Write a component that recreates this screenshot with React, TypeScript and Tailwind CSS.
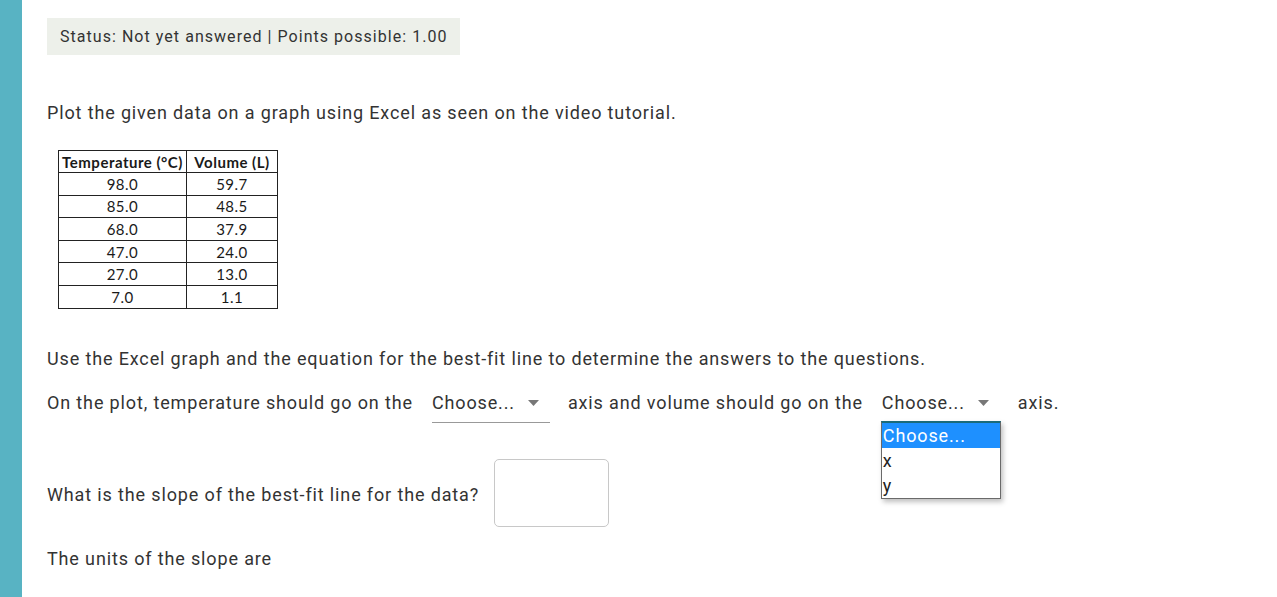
import React from "react";

const rows = [
  ["98.0", "59.7"],
  ["85.0", "48.5"],
  ["68.0", "37.9"],
  ["47.0", "24.0"],
  ["27.0", "13.0"],
  ["7.0", "1.1"],
];

function Caret() {
  return (
    <svg width="11" height="6" viewBox="0 0 11 6" className="ml-[13px] mt-[2px]">
      <polygon points="0,0 11,0 5.5,6" fill="#777" />
    </svg>
  );
}

function Select({ open }: { open?: boolean }) {
  return (
    <div className="relative">
      <div className="flex h-[34px] w-[118px] items-start border-b border-[#999]">
        <span className="leading-[27px]">Choose...</span>
        <div className="flex h-[27px] items-center">
          <Caret />
        </div>
      </div>
      {open && (
        <div className="absolute left-[-1px] top-[32px] z-10 w-[120px] border border-t-2 border-[#6a6a6a] border-t-[#1b6b7b] bg-white shadow-[2px_3px_5px_rgba(0,0,0,0.25)]">
          <div className="h-[25px] bg-[#1e90ff] pl-[1px] leading-[25px] text-white">Choose...</div>
          <div className="h-[25px] pl-[1px] leading-[25px] text-[#222]">x</div>
          <div className="h-[25px] pl-[1px] leading-[25px] text-[#222]">y</div>
        </div>
      )}
    </div>
  );
}

export default function App() {
  return (
    <div
      className="flex min-h-[597px] w-[1277px] bg-white text-[18px] tracking-[0.86px] text-[#333]"
      style={{ fontFamily: "Roboto, 'Liberation Sans', sans-serif" }}
    >
      <div className="w-[22px] shrink-0 bg-[#58b3c3]" />
      <div className="flex-1 pl-[25px]">
        <div className="mt-[18px] flex h-[37px] w-[413px] items-center bg-[#edf0ea] pl-[13px] text-[16px] tracking-[1.04px] text-[#333]">
          Status: Not yet answered | Points possible: 1.00
        </div>

        <p className="mt-[44px] leading-[27px]">
          Plot the given data on a graph using Excel as seen on the video tutorial.
        </p>

        <div
          className="ml-[11px] mt-[24px] w-[224px] tracking-[0.5px]"
          style={{ fontFamily: "Lato, 'Open Sans', sans-serif" }}
        >
          <table className="border-collapse text-[15px] text-[#1a1a1a]">
            <thead>
              <tr className="h-[22px]">
                <th className="w-[128px] whitespace-nowrap border border-[#222] px-0 text-center font-bold leading-[20px]">
                  Temperature (°C)
                </th>
                <th className="w-[91px] whitespace-nowrap border border-[#222] px-0 text-center font-bold leading-[20px]">
                  Volume (L)
                </th>
              </tr>
            </thead>
            <tbody>
              {rows.map((r, i) => (
                <tr key={i} className="h-[22.6px]">
                  <td className="border border-[#222] text-center leading-[20px]">{r[0]}</td>
                  <td className="border border-[#222] text-center leading-[20px]">{r[1]}</td>
                </tr>
              ))}
            </tbody>
          </table>
        </div>

        <p className="mt-[36px] leading-[27px]">
          Use the Excel graph and the equation for the best-fit line to determine the answers to the questions.
        </p>

        <div className="mt-[17px] flex items-start">
          <span className="leading-[27px]">On the plot, temperature should go on the</span>
          <div className="ml-[19px]">
            <Select />
          </div>
          <span className="ml-[18px] leading-[27px]">axis and volume should go on the</span>
          <div className="ml-[19px]">
            <Select open />
          </div>
          <span className="ml-[18px] leading-[27px]">axis.</span>
        </div>

        <div className="mt-[36px] flex items-center">
          <span className="pt-[4px] leading-[27px]">What is the slope of the best-fit line for the data?</span>
          <input
            type="text"
            className="ml-[15px] h-[68px] w-[115px] rounded-[5px] border border-[#c8c8c8] bg-white outline-none"
          />
        </div>

        <p className="mt-[18px] leading-[27px]">The units of the slope are</p>
      </div>
    </div>
  );
}
